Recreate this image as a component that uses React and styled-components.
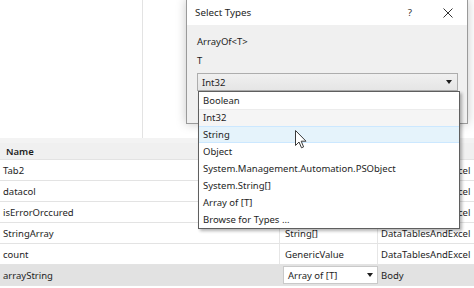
import styled, { createGlobalStyle } from 'styled-components';

const GlobalStyle = createGlobalStyle`
  html, body {
    margin: 0;
    padding: 0;
    background: #ffffff;
  }
  body {
    font-family: 'Noto Sans', 'Open Sans', sans-serif;
    font-size: 9.5px;
    color: #1e1e1e;
  }
`;

const Page = styled.div`
  position: relative;
  width: 474px;
  height: 288px;
  overflow: hidden;
  background: #ffffff;
  display: flex;
  flex-direction: column;
`;

const TopPane = styled.div`
  height: 138px;
  display: grid;
  grid-template-columns: 143px 1fr;
`;

const Pane = styled.div`
  border-right: ${({ $divider }) => ($divider ? '1px solid #e3e3e3' : 'none')};
`;

const Splitter = styled.div`
  height: 5px;
  background: #f3f3f3;
`;

const Grid = styled.div`
  display: flex;
  flex-direction: column;
`;

const Row = styled.div`
  display: grid;
  grid-template-columns: 280px 98px 1fr;
  height: ${({ $header }) => ($header ? '17px' : '21px')};
  background: ${({ $header, $selected }) =>
    $header ? '#f0f0f0' : $selected ? '#e2e2e2' : '#ffffff'};
  border-bottom: 1px solid #e3e3e3;
  box-sizing: border-box;
  font-weight: ${({ $header }) => ($header ? 600 : 400)};
`;

const Cell = styled.div`
  display: flex;
  align-items: center;
  padding-left: ${({ $pad }) => $pad ?? 3}px;
  border-right: ${({ $line }) => ($line ? '1px solid #e6e6e6' : 'none')};
  white-space: nowrap;
  overflow: hidden;
`;

const InlineCombo = styled.div`
  display: flex;
  align-items: center;
  justify-content: space-between;
  margin: 1px 0 1px 3px;
  flex: 1;
  padding: 0 4px;
  background: #ffffff;
  border: 1px solid #c9c9c9;
  height: 18px;
  box-sizing: border-box;
`;

const Arrow = styled.span`
  width: 0;
  height: 0;
  border-left: 3px solid transparent;
  border-right: 3px solid transparent;
  border-top: 4px solid #1e1e1e;
`;

const Dialog = styled.div`
  position: absolute;
  left: 186px;
  top: -1px;
  width: 282px;
  height: 125px;
  box-sizing: border-box;
  border: 1px solid #9a9a9a;
  background: #f0f0f0;
  box-shadow: 0 0 10px rgba(0, 0, 0, 0.22);
  display: flex;
  flex-direction: column;
`;

const TitleBar = styled.div`
  height: 25px;
  background: #ffffff;
  display: flex;
  align-items: center;
  padding: 0 0 0 8px;
  font-size: 9.8px;
`;

const TitleText = styled.span`
  flex: 1;
`;

const TitleButton = styled.span`
  width: 38px;
  display: flex;
  justify-content: center;
  color: #333;
`;

const DialogBody = styled.div`
  padding: 10px 9px 0 10px;
  display: flex;
  flex-direction: column;
`;

const Label = styled.div`
  height: 19px;
  line-height: 13px;
`;

const ComboWrap = styled.div`
  position: relative;
`;

const Combo = styled.div`
  height: 18px;
  box-sizing: border-box;
  border: 1px solid #adadad;
  background: linear-gradient(#f0f0f0, #e5e5e5);
  display: flex;
  align-items: center;
  justify-content: space-between;
  padding: 0 5px 0 4px;
`;

const DropList = styled.div`
  position: absolute;
  left: 1px;
  top: 100%;
  width: 260px;
  border: 1px solid #5f5f5f;
  background: #ffffff;
  box-shadow: 2px 2px 3px rgba(0, 0, 0, 0.3);
  z-index: 2;
`;

const Item = styled.div`
  height: 17px;
  box-sizing: border-box;
  display: flex;
  align-items: center;
  padding-left: 4px;
  background: ${({ $hover, $current }) =>
    $hover ? '#e5f3fb' : $current ? '#f5f5f5' : '#ffffff'};
  border-top: 1px solid ${({ $hover, $current }) =>
    $hover ? '#cce8ff' : $current ? '#ececec' : 'transparent'};
  border-bottom: 1px solid ${({ $hover }) => ($hover ? '#cce8ff' : 'transparent')};
`;

const Cursor = styled.svg`
  position: absolute;
  left: 295px;
  top: 130px;
  z-index: 3;
`;

const rows = [
  { name: 'Tab2', type: '', scope: 'DataTablesAndExcel' },
  { name: 'datacol', type: '', scope: 'DataTablesAndExcel' },
  { name: 'isErrorOrccured', type: '', scope: 'DataTablesAndExcel' },
  { name: 'StringArray', type: 'String[]', scope: 'DataTablesAndExcel' },
  { name: 'count', type: 'GenericValue', scope: 'DataTablesAndExcel' },
];

const types = [
  'Boolean',
  'Int32',
  'String',
  'Object',
  'System.Management.Automation.PSObject',
  'System.String[]',
  'Array of [T]',
  'Browse for Types ...',
];

export default function App() {
  return (
    <>
      <GlobalStyle />
      <Page>
        <TopPane>
          <Pane $divider />
          <Pane />
        </TopPane>
        <Splitter />
        <Grid>
          <Row $header>
            <Cell $pad={6}>Name</Cell>
            <Cell />
            <Cell />
          </Row>
          {rows.map((r) => (
            <Row key={r.name}>
              <Cell $line>{r.name}</Cell>
              <Cell $line $pad={5}>{r.type}</Cell>
              <Cell>{r.scope}</Cell>
            </Row>
          ))}
          <Row $selected>
            <Cell>arrayString</Cell>
            <Cell $pad={0}>
              <InlineCombo>
                <span>Array of [T]</span>
                <Arrow />
              </InlineCombo>
            </Cell>
            <Cell>Body</Cell>
          </Row>
        </Grid>

        <Dialog>
          <TitleBar>
            <TitleText>Select Types</TitleText>
            <TitleButton>?</TitleButton>
            <TitleButton>
              <svg width="10" height="10" viewBox="0 0 10 10">
                <path d="M0.5 0.5 L9.5 9.5 M9.5 0.5 L0.5 9.5" stroke="#333" strokeWidth="1" />
              </svg>
            </TitleButton>
          </TitleBar>
          <DialogBody>
            <Label>ArrayOf&lt;T&gt;</Label>
            <Label>T</Label>
            <ComboWrap>
              <Combo>
                <span>Int32</span>
                <Arrow />
              </Combo>
              <DropList>
                {types.map((t) => (
                  <Item key={t} $hover={t === 'String'} $current={t === 'Int32'}>
                    {t}
                  </Item>
                ))}
              </DropList>
            </ComboWrap>
          </DialogBody>
        </Dialog>

        <Cursor width="12" height="19" viewBox="0 0 12 19">
          <path
            d="M0.5 0.5 L0.5 15.5 L4 12 L6.5 17.8 L8.6 16.9 L6.2 11.2 L11 11.2 Z"
            fill="#ffffff"
            stroke="#3a3a3a"
            strokeWidth="1"
            strokeLinejoin="round"
          />
        </Cursor>
      </Page>
    </>
  );
}
